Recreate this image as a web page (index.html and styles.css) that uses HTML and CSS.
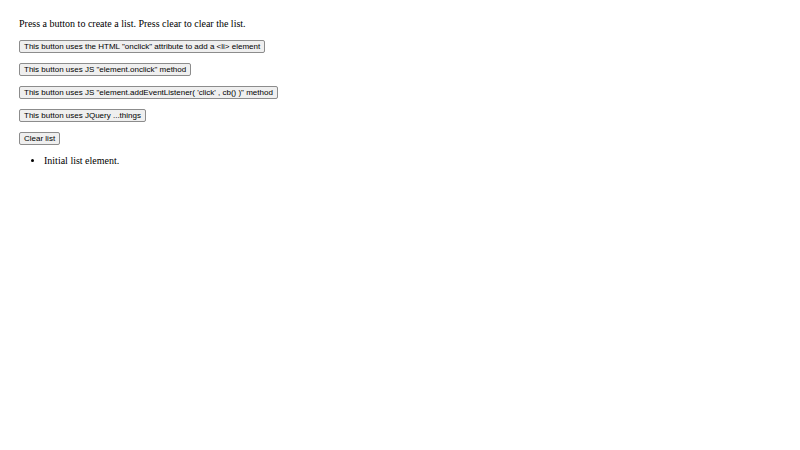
FILE: index.html
```
<!DOCTYPE html>
<html lang="en">
<head>
<meta charset="utf-8">
<title>Button events</title>
<link rel="stylesheet" href="styles.css">
</head>
<body>
<p class="intro">Press a button to create a list. Press clear to clear the list.</p>
<main class="actions">
<button type="button">This button uses the HTML "onclick" attribute to add a &lt;li&gt; element</button>
<button type="button">This button uses JS "element.onclick" method</button>
<button type="button">This button uses JS "element.addEventListener( 'click' , cb() )" method</button>
<button type="button">This button uses JQuery ...things</button>
<button type="button">Clear list</button>
</main>
<ul class="list"><li>Initial list element.</li></ul>
</body>
</html>
```
FILE: styles.css
```
body {
  margin: 18px 19px;
  background: #fff;
  color: #000;
  font: 10px/12px "Liberation Serif", "Times New Roman", serif;
}

.intro {
  margin: 0 0 10px;
}

.actions {
  display: flex;
  flex-direction: column;
  align-items: flex-start;
  gap: 10px;
}

button {
  padding: 1px 4px;
  border: 1px solid #8c8c8c;
  border-radius: 2px;
  background: #efefef;
  color: #000;
  font: 8px/9px "Liberation Sans", Arial, sans-serif;
}

.list {
  margin: 10px 0;
  padding-left: 25px;
}
```
